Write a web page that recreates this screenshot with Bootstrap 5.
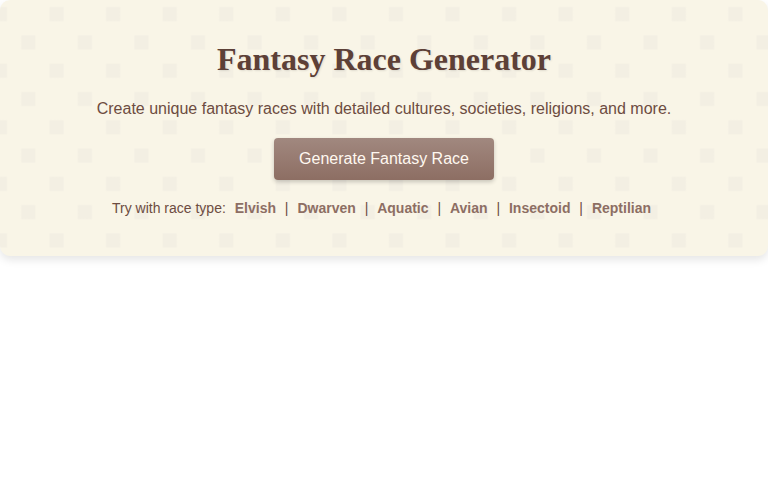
<!DOCTYPE html>
<html lang="en">
<head>
<meta charset="utf-8">
<meta name="viewport" content="width=device-width, initial-scale=1">
<title>Fantasy Race Generator</title>
<link href="https://cdn.jsdelivr.net/npm/bootstrap@5.3.0/dist/css/bootstrap.min.css" rel="stylesheet">
<style>
body { font-family: "Liberation Sans", Arial, sans-serif; background: #fff; }
.hero { background: #f9f5e7; color: #6d4c41; border-radius: 10px; box-shadow: 0 4px 8px rgba(0,0,0,.1); padding: 40px 20px; }
.hero-pattern { z-index: 0; border-radius: 10px; pointer-events: none; }
.hero-body { z-index: 1; }
.hero-title { font: bold 32px/38px "Liberation Serif", "Times New Roman", serif; color: #5d4037; text-shadow: 1px 1px 2px rgba(0,0,0,.1); margin-bottom: 20px; }
.hero-lead { font-size: 16px; line-height: 22px; margin-bottom: 18px; }
.btn-generate { --bs-btn-color: #fff8f0; --bs-btn-hover-color: #fff; --bs-btn-active-color: #fff; background: linear-gradient(#a1887f, #8d6e63); border: 0; border-radius: 4px; padding: 12px 25px; font-size: 16px; line-height: 18px; box-shadow: 0 2px 4px rgba(0,0,0,.2); }
.race-types { font-size: 14px; line-height: 16px; margin-top: 20px; }
.race-types a { color: #8d6e63; margin: 0 5px; }
</style>
</head>
<body class="min-vh-100">
<main class="hero position-relative text-center">
  <svg class="hero-pattern position-absolute top-0 start-0 w-100 h-100" aria-hidden="true">
    <defs>
      <pattern id="tiles" width="40" height="40" patternUnits="userSpaceOnUse" patternTransform="rotate(45)">
        <path d="M10 0L20 10L10 20L0 10Z" fill="#f3efe3"/>
      </pattern>
    </defs>
    <rect width="100%" height="100%" fill="url(#tiles)"/>
  </svg>
  <div class="hero-body position-relative">
    <h1 class="hero-title">Fantasy Race Generator</h1>
    <p class="hero-lead">Create unique fantasy races with detailed cultures, societies, religions, and more.</p>
    <button type="button" class="btn btn-generate">Generate Fantasy Race</button>
    <p class="race-types mb-0">Try with race type:
      <a href="#elvish" class="fw-bold text-decoration-none">Elvish</a> |
      <a href="#dwarven" class="fw-bold text-decoration-none">Dwarven</a> |
      <a href="#aquatic" class="fw-bold text-decoration-none">Aquatic</a> |
      <a href="#avian" class="fw-bold text-decoration-none">Avian</a> |
      <a href="#insectoid" class="fw-bold text-decoration-none">Insectoid</a> |
      <a href="#reptilian" class="fw-bold text-decoration-none">Reptilian</a>
    </p>
  </div>
</main>
<script src="https://cdn.jsdelivr.net/npm/bootstrap@5.3.0/dist/js/bootstrap.bundle.min.js"></script>
</body>
</html>
